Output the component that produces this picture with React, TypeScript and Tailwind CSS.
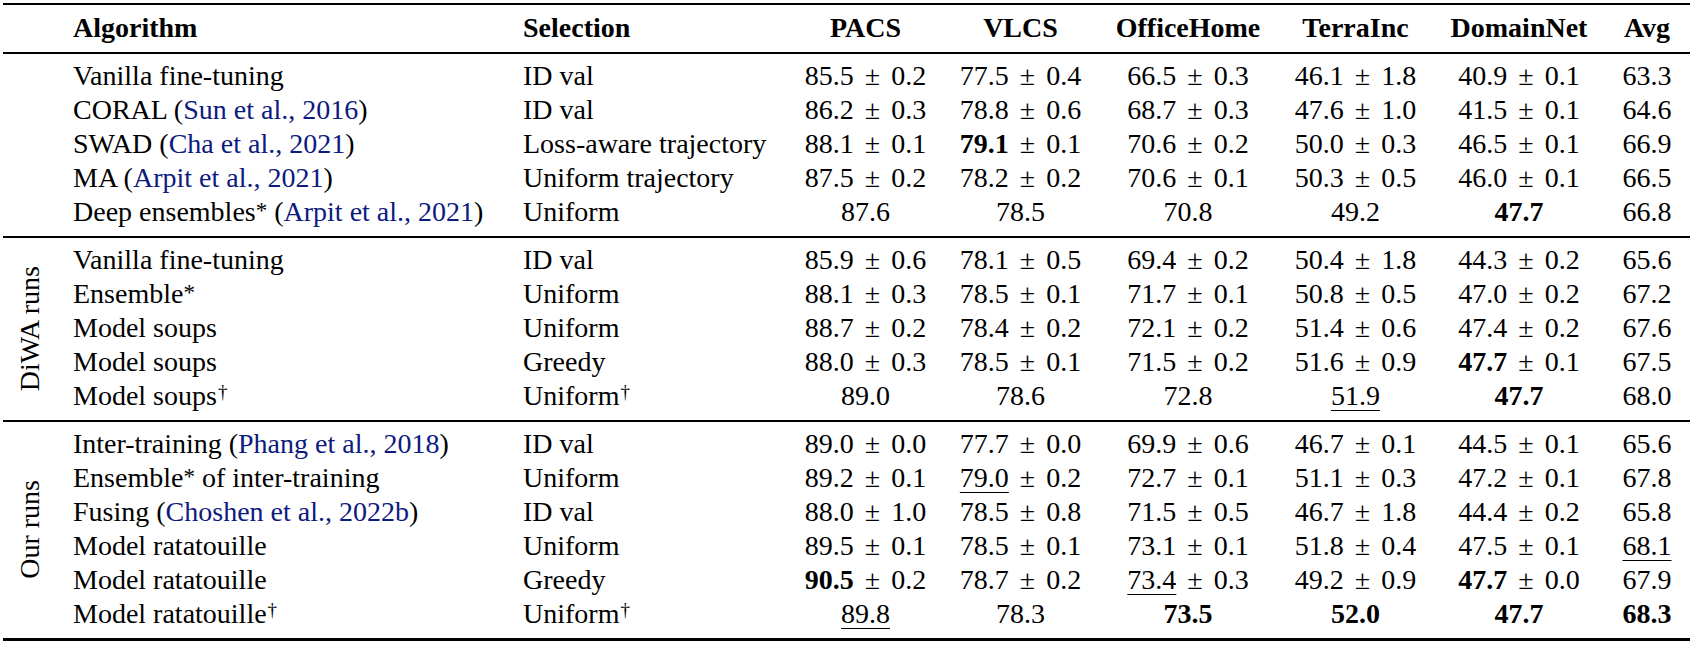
import React from "react";

type Cell = React.ReactNode;

const COLS =
  "grid grid-cols-[53px_450px_282px_155px_155px_180px_155px_172px_84px] auto-rows-[34px] leading-[34px]";

const Cite = ({ children }: { children: React.ReactNode }) => (
  <span className="text-[#0d1a80]">{children}</span>
);

const Star = () => <span className="relative -top-[3px] text-[23px] leading-none">*</span>;
const Dag = () => <span className="relative -top-[7px] ml-[1px] text-[19px] leading-none">†</span>;

function N(spec: string): Cell {
  let style = "";
  let s = spec;
  if (s.startsWith("b:") || s.startsWith("u:")) {
    style = s.slice(0, 1);
    s = s.slice(2);
  }
  const [main, pm] = s.split("|");
  const mainEl =
    style === "b" ? (
      <span className="font-bold">{main}</span>
    ) : style === "u" ? (
      <span className="underline decoration-[1.3px] underline-offset-[5px]">{main}</span>
    ) : (
      <span>{main}</span>
    );
  return (
    <span className="whitespace-nowrap">
      {mainEl}
      {pm !== undefined && (
        <>
          <span className="mx-[11px]">±</span>
          <span>{pm}</span>
        </>
      )}
    </span>
  );
}

type Row = { alg: Cell; sel: Cell; vals: string[] };

const sec1: Row[] = [
  { alg: "Vanilla fine-tuning", sel: "ID val", vals: ["85.5|0.2", "77.5|0.4", "66.5|0.3", "46.1|1.8", "40.9|0.1", "63.3"] },
  { alg: (<>CORAL (<Cite>Sun et al., 2016</Cite>)</>), sel: "ID val", vals: ["86.2|0.3", "78.8|0.6", "68.7|0.3", "47.6|1.0", "41.5|0.1", "64.6"] },
  { alg: (<>SWAD (<Cite>Cha et al., 2021</Cite>)</>), sel: "Loss-aware trajectory", vals: ["88.1|0.1", "b:79.1|0.1", "70.6|0.2", "50.0|0.3", "46.5|0.1", "66.9"] },
  { alg: (<>MA (<Cite>Arpit et al., 2021</Cite>)</>), sel: "Uniform trajectory", vals: ["87.5|0.2", "78.2|0.2", "70.6|0.1", "50.3|0.5", "46.0|0.1", "66.5"] },
  { alg: (<>Deep ensembles<Star /> (<Cite>Arpit et al., 2021</Cite>)</>), sel: "Uniform", vals: ["87.6", "78.5", "70.8", "49.2", "b:47.7", "66.8"] },
];

const sec2: Row[] = [
  { alg: "Vanilla fine-tuning", sel: "ID val", vals: ["85.9|0.6", "78.1|0.5", "69.4|0.2", "50.4|1.8", "44.3|0.2", "65.6"] },
  { alg: (<>Ensemble<Star /></>), sel: "Uniform", vals: ["88.1|0.3", "78.5|0.1", "71.7|0.1", "50.8|0.5", "47.0|0.2", "67.2"] },
  { alg: "Model soups", sel: "Uniform", vals: ["88.7|0.2", "78.4|0.2", "72.1|0.2", "51.4|0.6", "47.4|0.2", "67.6"] },
  { alg: "Model soups", sel: "Greedy", vals: ["88.0|0.3", "78.5|0.1", "71.5|0.2", "51.6|0.9", "b:47.7|0.1", "67.5"] },
  { alg: (<>Model soups<Dag /></>), sel: (<>Uniform<Dag /></>), vals: ["89.0", "78.6", "72.8", "u:51.9", "b:47.7", "68.0"] },
];

const sec3: Row[] = [
  { alg: (<>Inter-training (<Cite>Phang et al., 2018</Cite>)</>), sel: "ID val", vals: ["89.0|0.0", "77.7|0.0", "69.9|0.6", "46.7|0.1", "44.5|0.1", "65.6"] },
  { alg: (<>Ensemble<Star /> of inter-training</>), sel: "Uniform", vals: ["89.2|0.1", "u:79.0|0.2", "72.7|0.1", "51.1|0.3", "47.2|0.1", "67.8"] },
  { alg: (<>Fusing (<Cite>Choshen et al., 2022b</Cite>)</>), sel: "ID val", vals: ["88.0|1.0", "78.5|0.8", "71.5|0.5", "46.7|1.8", "44.4|0.2", "65.8"] },
  { alg: "Model ratatouille", sel: "Uniform", vals: ["89.5|0.1", "78.5|0.1", "73.1|0.1", "51.8|0.4", "47.5|0.1", "u:68.1"] },
  { alg: "Model ratatouille", sel: "Greedy", vals: ["b:90.5|0.2", "78.7|0.2", "u:73.4|0.3", "49.2|0.9", "b:47.7|0.0", "67.9"] },
  { alg: (<>Model ratatouille<Dag /></>), sel: (<>Uniform<Dag /></>), vals: ["u:89.8", "78.3", "b:73.5", "b:52.0", "b:47.7", "b:68.3"] },
];

function Section({ rows, label }: { rows: Row[]; label?: string }) {
  const span = rows.length === 6 ? "row-span-6" : "row-span-5";
  return (
    <div className={COLS}>
      <div className={`${span} col-start-1 row-start-1 flex items-center justify-center`}>
        {label && (
          <span className="[writing-mode:vertical-rl] rotate-180 leading-none whitespace-nowrap">{label}</span>
        )}
      </div>
      {rows.map((r, i) => (
        <React.Fragment key={i}>
          <div className="col-start-2 px-[17px] whitespace-nowrap">{r.alg}</div>
          <div className="col-start-3 px-[17px] whitespace-nowrap">{r.sel}</div>
          {r.vals.map((v, j) => (
            <div key={j} className="text-center whitespace-nowrap">
              {N(v)}
            </div>
          ))}
        </React.Fragment>
      ))}
    </div>
  );
}

export default function App() {
  return (
    <div className="w-[1693px] h-[645px] bg-white overflow-hidden">
      <div className="ml-[3px] w-[1687px] pt-[3px] font-['Liberation_Serif',serif] text-[28px] text-black">
        <div className="h-[2.4px] bg-black" />
        <div className={`${COLS} mt-[6px] font-bold`}>
          <div />
          <div className="px-[17px]">Algorithm</div>
          <div className="px-[17px]">Selection</div>
          <div className="text-center">PACS</div>
          <div className="text-center">VLCS</div>
          <div className="text-center">OfficeHome</div>
          <div className="text-center">TerraInc</div>
          <div className="text-center">DomainNet</div>
          <div className="text-center">Avg</div>
        </div>
        <div className="mt-[7px] h-[1.5px] bg-black" />
        <div className="mt-[5.5px]">
          <Section rows={sec1} />
        </div>
        <div className="mt-[7px] h-[1.5px] bg-black" />
        <div className="mt-[5.5px]">
          <Section rows={sec2} label="DiWA runs" />
        </div>
        <div className="mt-[7px] h-[1.5px] bg-black" />
        <div className="mt-[5.5px]">
          <Section rows={sec3} label="Our runs" />
        </div>
        <div className="mt-[7px] h-[2.4px] bg-black" />
      </div>
    </div>
  );
}
